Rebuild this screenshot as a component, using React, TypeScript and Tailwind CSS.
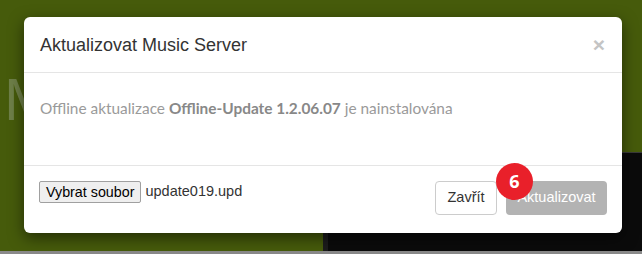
import React from "react";

export default function App() {
  return (
    <div className="relative h-[254px] w-[642px] overflow-hidden bg-[#465b0b] font-['Liberation_Sans',Arial,sans-serif]">
      {/* background app */}
      <div className="absolute left-[4px] top-[70px] select-none text-[60px] leading-none text-[#7f8f62] opacity-70">
        M
      </div>
      <div className="absolute left-[323px] top-[152px] h-[99px] w-[319px] border-t border-[#3a3a3a] bg-[#0b0b0b]">
        <div className="h-full w-[5px] bg-[#1c1c1c]" />
      </div>
      <div className="absolute bottom-0 left-0 h-[3px] w-full bg-[#8a8a8a]" />

      {/* modal */}
      <div className="absolute left-[24px] top-[17px] w-[598px] rounded-[6px] bg-white shadow-[0_5px_15px_rgba(0,0,0,0.5)]">
        <div className="flex h-[56px] items-center justify-between border-b border-[#e5e5e5] px-[16px]">
          <h4 className="text-[18px] leading-[26px] text-[#333]">Aktualizovat Music Server</h4>
          <span className="mr-[1px] text-[21px] font-bold leading-none text-[#c4c4c4]">×</span>
        </div>
        <div className="h-[92px] px-[16px] pt-[24px] font-['Lato',sans-serif] text-[15.4px] text-[#9a9a9a]">
          Offline aktualizace <b className="text-[#888]">Offline-Update 1.2.06.07</b> je nainstalována
        </div>
        <div className="flex items-start justify-between border-t border-[#e5e5e5] pl-[15px] pr-[15px] pb-[18px] pt-[15px]">
          <div className="flex items-center gap-[4px]">
            <button className="h-[22px] rounded-[2px] border border-[#a0a0a0] bg-[#efefef] px-[6px] text-[14.3px] text-black">
              Vybrat soubor
            </button>
            <span className="text-[14.5px] text-[#333]">update019.upd</span>
          </div>
          <div className="relative flex gap-[9px]">
            <button className="h-[34px] w-[62px] rounded-[4px] border border-[#ccc] bg-white text-[14.5px] text-[#333]">
              Zavřít
            </button>
            <button className="h-[34px] w-[101px] rounded-[4px] bg-[#b3b3b3] text-[14.5px] text-white">
              Aktualizovat
            </button>
            <div className="absolute left-[61px] top-[-18px] flex h-[37px] w-[37px] items-center justify-center rounded-full bg-[#e9202a] text-[18px] font-bold text-white font-['Open_Sans',sans-serif]">
              6
            </div>
          </div>
        </div>
      </div>
    </div>
  );
}
